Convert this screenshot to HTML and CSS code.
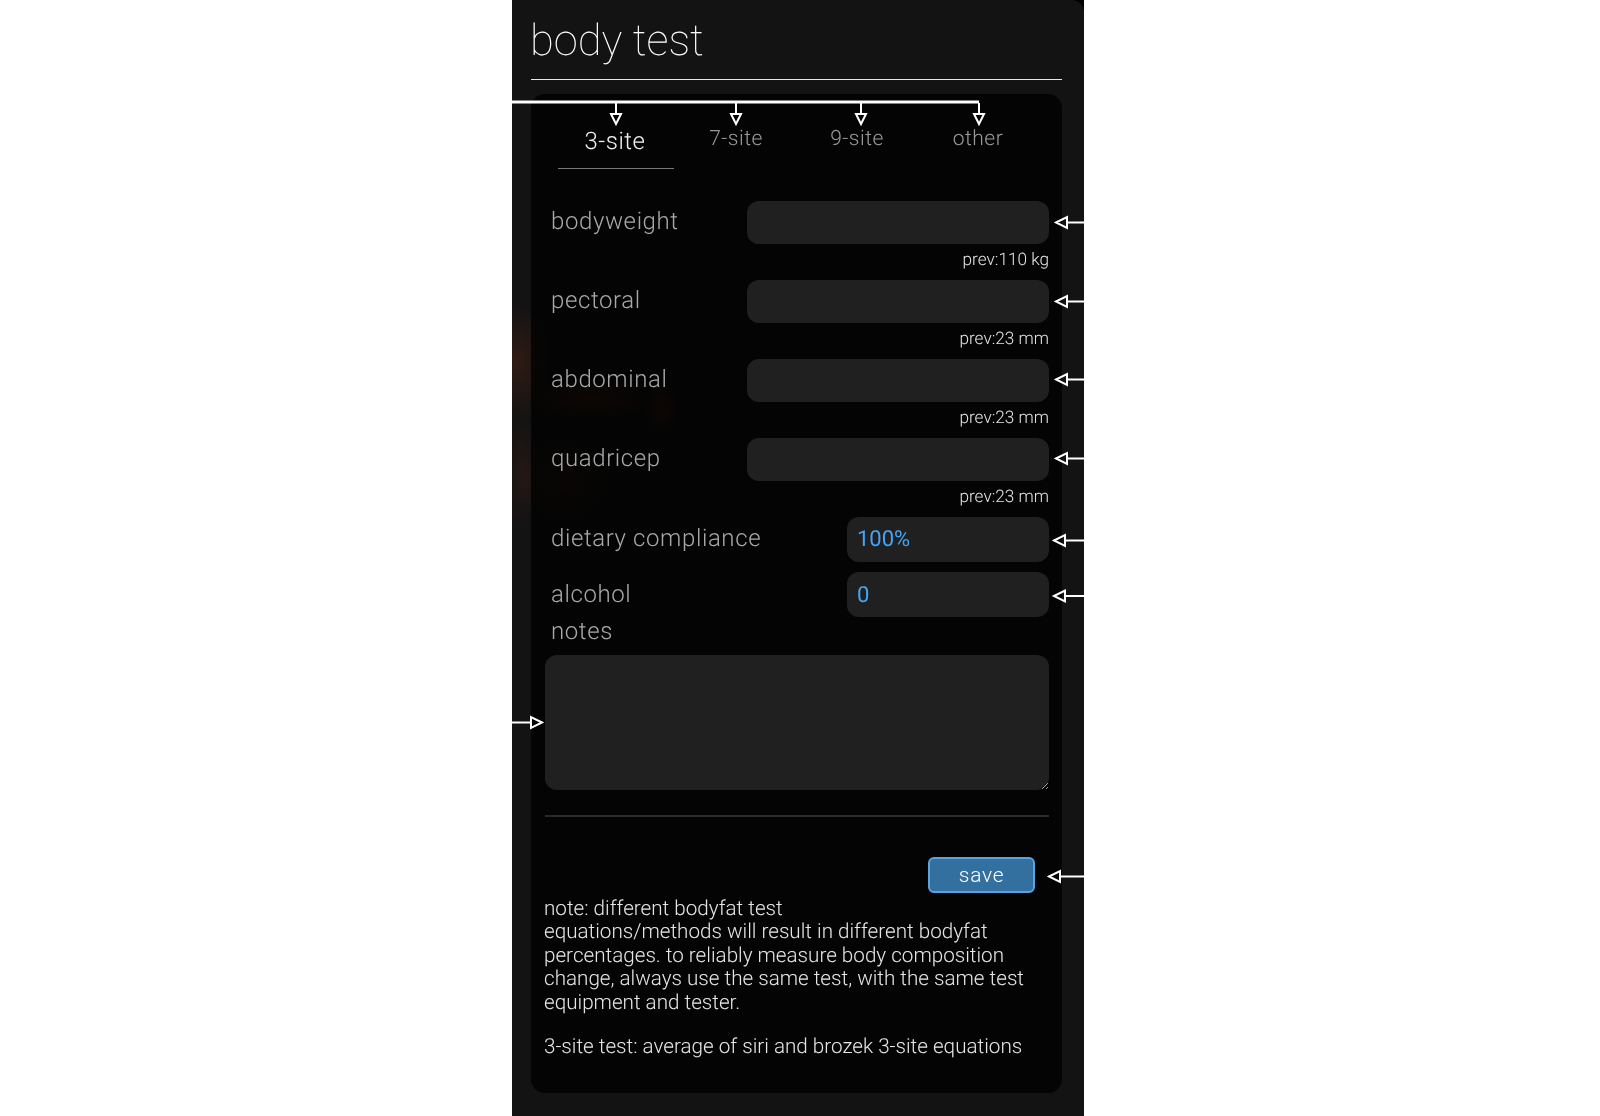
FILE: index.html
```html
<!DOCTYPE html>
<html lang="en">
<head>
    <meta charset="UTF-8">
    <meta name="viewport" content="width=device-width, initial-scale=1.0">
    <title>body test</title>
    <link rel="stylesheet" href="styles.css">
</head>
<body>
    <main class="screen">
        <h1 class="title">body test</h1>

        <section class="card">
            <nav class="tabs">
                <a class="tab active">3-site</a>
                <a class="tab">7-site</a>
                <a class="tab">9-site</a>
                <a class="tab">other</a>
            </nav>

            <div class="measure">
                <label>bodyweight</label>
                <input class="field" type="text">
                <span class="prev">prev:110 kg</span>
            </div>
            <div class="measure">
                <label>pectoral</label>
                <input class="field" type="text">
                <span class="prev">prev:23 mm</span>
            </div>
            <div class="measure">
                <label>abdominal</label>
                <input class="field" type="text">
                <span class="prev">prev:23 mm</span>
            </div>
            <div class="measure">
                <label>quadricep</label>
                <input class="field" type="text">
                <span class="prev">prev:23 mm</span>
            </div>

            <div class="picker">
                <label>dietary compliance</label>
                <div class="select">100%</div>
            </div>
            <div class="picker alcohol">
                <label>alcohol</label>
                <div class="select">0</div>
            </div>

            <label class="notes-label">notes</label>
            <textarea class="notes"></textarea>

            <hr class="rule">

            <div class="actions">
                <button class="save" type="button">save</button>
            </div>

            <p class="note">note: different bodyfat test<br>equations/methods will result in different bodyfat percentages. to reliably measure body composition change, always use the same test, with the same test equipment and tester.</p>
            <p class="note">3-site test: average of siri and brozek 3-site equations</p>
        </section>

        <!-- annotation arrows drawn over the screen -->
        <svg class="arrows" viewBox="0 0 572 1116" fill="none" stroke="#fff" stroke-width="2">
            <path d="M0 102H467" stroke-width="3"/>
            <path d="M104 103V113M224 103V113M349 103V113M467 103V113"/>
            <path d="M99 114H109L104 124ZM219 114H229L224 124ZM344 114H354L349 124ZM462 114H472L467 124Z"/>
            <path d="M555 222.500H572M555 301.500H572M555 379.500H572M555 458.500H572M553 540.500H572M553 596H572M548 876.500H572"/>
            <path d="M544 222.500L555 217V228ZM544 301.500L555 296V307ZM544 379.500L555 374V385ZM544 458.500L555 453V464ZM542 540.500L553 535V546ZM542 596L553 590.500V601.500ZM537 876.500L548 871V882Z"/>
            <path d="M0 722.500H18"/>
            <path d="M30 722.500L19 717V728Z"/>
        </svg>
    </main>
</body>
</html>
```

FILE: styles.css
```css
* {
    box-sizing: border-box;
}

body {
    margin: 0;
    background: #fff;
    font-family: Roboto, "Liberation Sans", sans-serif;
    font-weight: 300;
    text-rendering: geometricPrecision;
}

.screen {
    position: relative;
    width: 572px;
    height: 1116px;
    margin-left: 512px;
    padding: 0 22px 0 19px;
    /* the dim photo behind the screen */
    background:
        radial-gradient(ellipse 36px 60px at 4px 362px, rgba(140, 50, 20, 0.24), transparent),
        radial-gradient(ellipse 62px 20px at 80px 398px, rgba(140, 50, 20, 0.28), transparent),
        radial-gradient(ellipse 18px 26px at 150px 408px, rgba(140, 50, 20, 0.28), transparent),
        radial-gradient(ellipse 20px 60px at 8px 470px, rgba(140, 50, 20, 0.12), transparent),
        radial-gradient(ellipse 50px 40px at 50px 480px, rgba(140, 50, 20, 0.14), transparent),
        #131313;
    overflow: hidden;
}

.screen::after {
    content: "";
    position: absolute;
    top: 0;
    right: 0;
    width: 12px;
    height: 12px;
    background: radial-gradient(circle at 0 100%, transparent 11.500px, #000 12px);
}

.title {
    height: 80px;
    margin: 0;
    padding-top: 12px;
    border-bottom: 1px solid #e8e8e8;
    font-size: 43.500px;
    font-weight: 100;
    line-height: 58px;
    text-indent: -1px;
    color: #fff;
    will-change: transform;
}

.card {
    height: 999px;
    margin-top: 14px;
    padding: 0 13px 0 14px;
    border-radius: 14px;
    background: rgba(0, 0, 0, 0.75);
    will-change: transform;
}

.tabs {
    display: flex;
    gap: 5px;
    height: 75px;
    padding: 0 12px 0 13px;
    margin-bottom: 32px;
}

.tab {
    flex: 1;
    padding: 33px 2px 0 0;
    text-align: center;
    font-size: 21px;
    letter-spacing: 0.5px;
    color: #999;
}

.tab.active {
    border-bottom: 1px solid #777;
    font-size: 24px;
    color: #f0f0f0;
}

label {
    font-size: 24px;
    letter-spacing: 0.6px;
    color: #a8a8a8;
}

.measure {
    display: grid;
    grid-template-columns: 196px 1fr;
    grid-template-rows: 43px 36px;
    padding-left: 6px;
}

.measure label {
    line-height: 40px;
}

.field,
.select,
.notes {
    border: 0;
    border-radius: 12px;
    background: #202020;
    outline: none;
}

.prev {
    grid-column: 2;
    padding-top: 5.500px;
    text-align: right;
    font-size: 17.200px;
    color: #e4e4e4;
}

.picker {
    display: flex;
    justify-content: space-between;
    height: 45px;
    margin-bottom: 10px;
    padding-left: 6px;
}

.picker label {
    line-height: 43px;
}

.alcohol label {
    line-height: 45px;
}

.select {
    width: 202px;
    padding-left: 10px;
    font-size: 22px;
    font-weight: 400;
    line-height: 45px;
    color: #42a5f5;
}

.alcohol .select {
    line-height: 47px;
}

.notes-label {
    display: block;
    height: 38px;
    margin-top: -13px;
    padding-left: 6px;
    line-height: 34px;
}

.notes {
    display: block;
    width: 100%;
    height: 135px;
    margin-top: 3px;
    resize: vertical;
}

.rule {
    height: 2px;
    margin: 25px 0 0;
    border: 0;
    background: #2b2b2b;
}

.actions {
    display: flex;
    justify-content: flex-end;
    padding: 40px 14px 0 0;
}

.save {
    width: 107px;
    height: 36px;
    border: 2px solid #5aa5e0;
    border-radius: 6px;
    background: #336f9f;
    font-family: inherit;
    font-size: 21px;
    font-weight: 300;
    letter-spacing: 0.7px;
    color: #fff;
}

.note {
    margin: 4.500px 0 21px -1px;
    font-size: 20.650px;
    line-height: 23.500px;
    color: #e6e6e6;
}

.arrows {
    position: absolute;
    top: 0;
    left: 0;
    width: 572px;
    height: 1116px;
    pointer-events: none;
}
```
